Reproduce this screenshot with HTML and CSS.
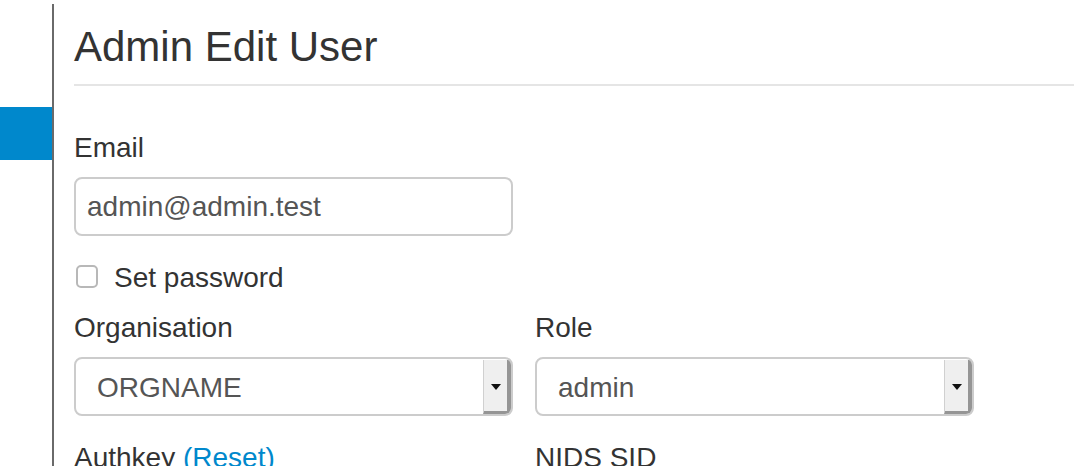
FILE: index.html
```html
<!DOCTYPE html>
<html lang="en">
<head>
<meta charset="utf-8">
<title>Admin Edit User</title>
<link rel="stylesheet" href="styles.css">
</head>
<body>
<div class="layout">
  <nav class="sidebar">
    <div class="side-item active"></div>
  </nav>
  <main class="content">
    <h2 class="page-title">Admin Edit User</h2>
    <form class="form">
      <div class="field">
        <label class="label" for="email">Email</label>
        <input class="text-input" id="email" type="text" value="admin@admin.test">
      </div>
      <label class="check-row">
        <span class="checkbox"></span>
        <span class="check-label">Set password</span>
      </label>
      <div class="row">
        <div class="field">
          <div class="label">Organisation</div>
          <div class="select">
            <span class="select-value">ORGNAME</span>
            <span class="select-btn"><span class="arrow"></span></span>
          </div>
        </div>
        <div class="field">
          <div class="label">Role</div>
          <div class="select">
            <span class="select-value">admin</span>
            <span class="select-btn"><span class="arrow"></span></span>
          </div>
        </div>
      </div>
      <div class="row row-last">
        <div class="label">Authkey <a class="link" href="#">(Reset)</a></div>
        <div class="label">NIDS SID</div>
      </div>
    </form>
  </main>
</div>
</body>
</html>
```

FILE: styles.css
```css
html, body {
  margin: 0;
  padding: 0;
  background: #ffffff;
  height: 100%;
  overflow: hidden;
}

body {
  font-family: "Liberation Sans", Arial, Helvetica, sans-serif;
  color: #333333;
}

.layout {
  display: flex;
  min-height: 466px;
}

.sidebar {
  width: 52px;
  flex: 0 0 52px;
}

.side-item.active {
  margin-top: 107px;
  height: 53px;
  background: #0088cc;
}

.content {
  flex: 1;
  margin-top: 4px;
  border-left: 2px solid #6a6a6a;
  padding-left: 20px;
}

.page-title {
  margin: 18px 0 0 0;
  font-size: 42px;
  line-height: 50px;
  font-weight: normal;
  color: #333333;
  padding-bottom: 12px;
  border-bottom: 2px solid #e5e5e5;
}

.form {
  padding-top: 44px;
}

.field {
  display: flex;
  flex-direction: column;
  width: 439px;
}

.label {
  font-size: 28px;
  line-height: 36px;
  color: #333333;
  margin-bottom: 11px;
}

.link {
  color: #0088cc;
  text-decoration: none;
}

.text-input {
  box-sizing: border-box;
  width: 439px;
  height: 59px;
  border: 2px solid #cccccc;
  border-radius: 8px;
  padding: 0 11px;
  font-family: "Liberation Sans", Arial, sans-serif;
  font-size: 28px;
  color: #555555;
  background: #ffffff;
  outline: none;
  margin: 0;
}

.check-row {
  display: flex;
  align-items: center;
  height: 36px;
  margin-top: 22px;
  padding-left: 2px;
}

.checkbox {
  box-sizing: border-box;
  width: 22px;
  height: 23px;
  border: 2px solid #b8b8b8;
  border-radius: 5px;
  background: #ffffff;
}

.check-label {
  font-size: 28px;
  margin-left: 16px;
  margin-top: 3px;
  color: #333333;
}

.row {
  display: grid;
  grid-template-columns: 439px 439px;
  column-gap: 22px;
  margin-top: 16px;
}

.select {
  box-sizing: border-box;
  width: 100%;
  height: 59px;
  border: 2px solid #cccccc;
  border-radius: 8px;
  display: flex;
  align-items: stretch;
  overflow: hidden;
  background: #ffffff;
}

.select-value {
  flex: 1;
  display: flex;
  align-items: center;
  padding-left: 21px;
  padding-top: 2px;
  font-size: 28px;
  color: #555555;
}

.select-btn {
  box-sizing: border-box;
  width: 28px;
  margin: 1px 0 0 0;
  background: #efefef;
  border-left: 1px solid #d0d0d0;
  border-right: 4px solid #959595;
  border-bottom: 3px solid #959595;
  border-bottom-right-radius: 4px;
  display: flex;
  align-items: center;
  justify-content: center;
}

.arrow {
  width: 0;
  height: 0;
  border-left: 5px solid transparent;
  border-right: 5px solid transparent;
  border-top: 6px solid #111111;
  margin-top: 2px;
}

.row-last {
  margin-top: 24px;
}

.row-last .label {
  margin-bottom: 0;
}
```
